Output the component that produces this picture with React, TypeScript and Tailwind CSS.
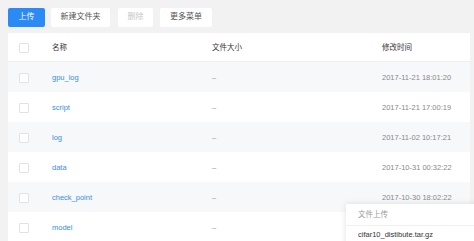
import React from 'react';

const rows = [
  { name: 'gpu_log', time: '2017-11-21 18:01:20' },
  { name: 'script', time: '2017-11-21 17:00:19' },
  { name: 'log', time: '2017-11-02 10:17:21' },
  { name: 'data', time: '2017-10-31 00:32:22' },
  { name: 'check_point', time: '2017-10-30 18:02:22' },
  { name: 'model', time: '' },
];

const Checkbox = () => (
  <span className="block w-[10px] h-[10px] bg-white border border-[#e3e3e3] rounded-[1px]" />
);

export default function App() {
  return (
    <div
      className="relative w-[474px] h-[241px] overflow-hidden bg-[#f2f2f2] text-[#333]"
      style={{ fontFamily: '"Liberation Sans", "Noto Sans CJK SC", sans-serif' }}
    >
      {/* Toolbar */}
      <div className="flex items-center h-[33px] pl-2 pt-[1px] gap-[6px] text-[8px]">
        <button className="w-[37px] h-[19px] rounded-[2px] bg-[#2b8af4] text-white">上传</button>
        <button className="w-[59px] h-[19px] rounded-[2px] bg-white text-[#555]">新建文件夹</button>
        <button className="w-[35px] h-[19px] rounded-[2px] bg-white text-[#c8c8c8] ml-[2px]">删除</button>
        <button className="w-[52px] h-[19px] rounded-[2px] bg-white text-[#555] ml-[1px]">更多菜单</button>
      </div>

      {/* Table */}
      <div className="ml-2 w-[462px] bg-white text-[7.5px]">
        <div className="flex items-center h-[29px] pt-[2px] border-b border-[#f0f0f0]">
          <div className="w-[44px] pl-[11px]"><Checkbox /></div>
          <div className="w-[160px] text-[#333]">名称</div>
          <div className="w-[170px] text-[#333]">文件大小</div>
          <div className="text-[#333]">修改时间</div>
        </div>
        {rows.map((r, i) => (
          <div
            key={r.name}
            className={`flex items-center h-[30px] pt-[2px] ${i % 2 === 0 ? 'bg-[#f7f8fa]' : 'bg-white'}`}
          >
            <div className="w-[44px] pl-[11px]"><Checkbox /></div>
            <div className="w-[160px] text-[#3a8ee6]">{r.name}</div>
            <div className="w-[170px] text-[#999]">–</div>
            <div className="text-[#888]">{r.time}</div>
          </div>
        ))}
      </div>

      {/* Upload popover */}
      <div className="absolute left-[346px] top-[204px] w-[140px] h-[50px] bg-white shadow-[0_0_6px_rgba(0,0,0,0.12)] text-[7.5px]">
        <div className="h-[22px] flex items-center pl-[12px] text-[#999] border-b border-[#f0f0f0]">文件上传</div>
        <div className="h-[18px] flex items-center pl-[12px] text-[#333]">cifar10_distibute.tar.gz</div>
      </div>
    </div>
  );
}
